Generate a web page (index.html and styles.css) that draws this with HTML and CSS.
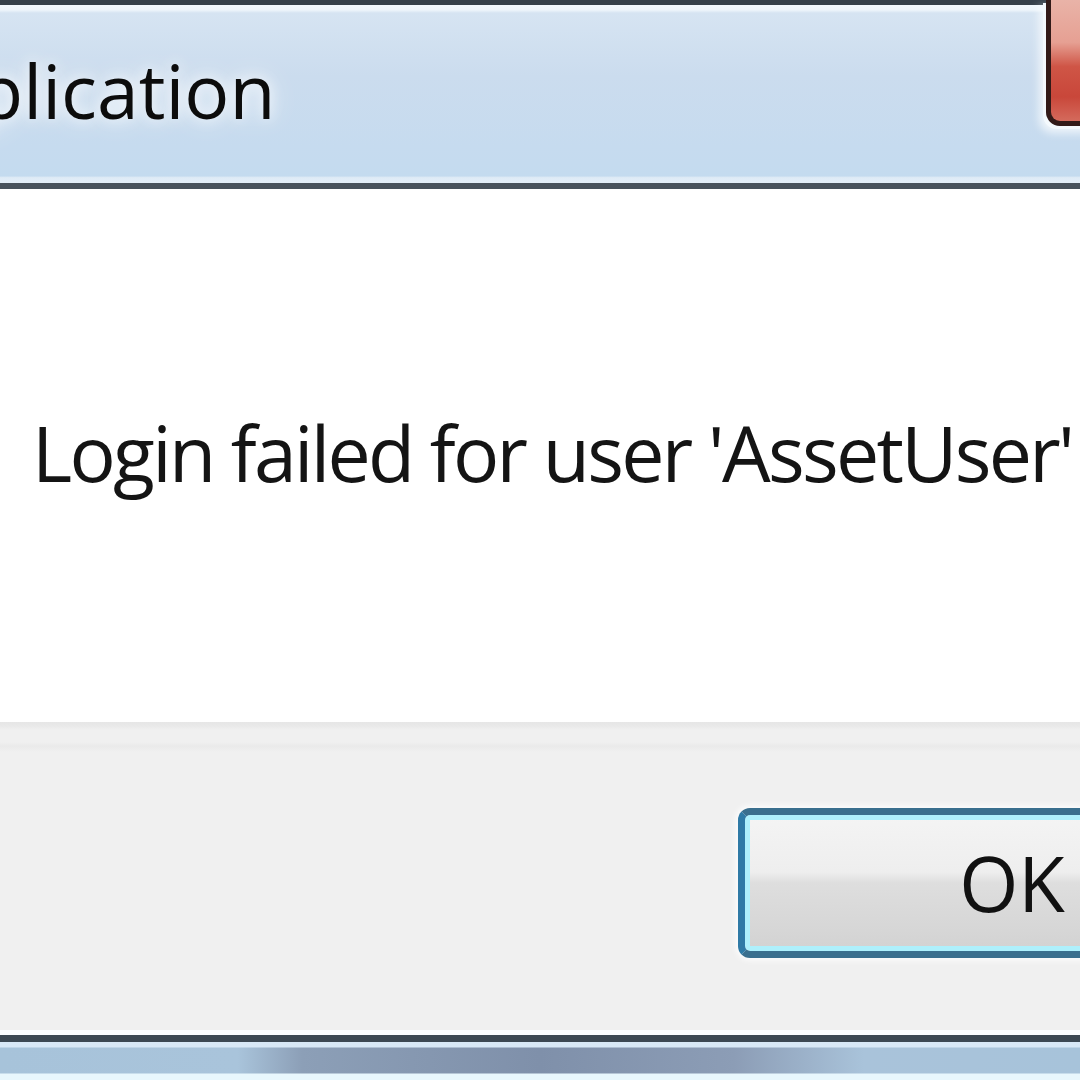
FILE: index.html
```html
<!DOCTYPE html>
<html>
<head>
<meta charset="utf-8">
<link rel="stylesheet" href="styles.css">
</head>
<body>
<div class="window">
  <div class="titlebar">
    <span class="title">Application</span>
    <div class="close"></div>
  </div>
  <div class="content">
    <p class="message">Login failed for user 'AssetUser'</p>
  </div>
  <div class="footer">
    <button class="ok">OK</button>
  </div>
  <div class="frame-bottom"></div>
</div>
</body>
</html>
```
FILE: styles.css
```css
html, body {
  margin: 0;
  padding: 0;
  width: 1080px;
  height: 1080px;
  overflow: hidden;
  background: #ffffff;
}
.window {
  width: 1080px;
  height: 1080px;
  overflow: hidden;
  display: flex;
  flex-direction: column;
  font-family: "Open Sans", "DejaVu Sans", sans-serif;
  color: #111;
}
.titlebar {
  position: relative;
  flex-shrink: 0;
  height: 178px;
  border-top: 5px solid #36404a;
  box-sizing: content-box;
  background:
    linear-gradient(180deg, #f2f8fd 0px, #eef5fb 5px, #d6e4f2 8px, #cbdcee 40%, #c6dbef 80%, #c4dbef 96%, #dfebf6 97%, #e3eef8 100%);
  border-bottom: 6px solid #48525c;
  display: flex;
  align-items: flex-start;
}
.title {
  font-size: 75px;
  line-height: 1;
  margin-left: -116px;
  margin-top: 48px;
  color: #0c0c0c;
  white-space: nowrap;
  text-shadow: 0 0 14px rgba(255,255,255,0.95), 0 0 28px rgba(255,255,255,0.8);
}
.close {
  position: absolute;
  top: -5px;
  left: 1046px;
  width: 60px;
  height: 126px;
  box-sizing: border-box;
  border: 5px solid #321a18;
  border-top: none;
  border-bottom-left-radius: 14px;
  background: linear-gradient(180deg, #e9b3a8 0%, #e6a093 35%, #cf5546 55%, #c9473a 80%, #d46a5c 100%);
  box-shadow: -3px 3px 0 #f4f9fd, -7px 7px 8px rgba(255,255,255,0.7);
}
.content {
  flex-shrink: 0;
  height: 533px;
  background: #ffffff;
  box-sizing: border-box;
  padding-top: 225px;
  padding-left: 32px;
}
.message {
  margin: 0;
  font-size: 77px;
  line-height: 1;
  letter-spacing: -2.7px;
  white-space: nowrap;
  color: #141414;
}
.footer {
  flex-shrink: 0;
  height: 313px;
  box-sizing: border-box;
  background: linear-gradient(180deg, #e6e6e6 0px, #e9e9e9 4px, #f0f0f0 8px, #f0f0f0 20px, #eaeaea 24px, #f0f0f0 30px, #f0f0f0 100%);
  padding-top: 86px;
  padding-left: 738px;
  border-bottom: 5px solid #fbfdff;
}
.ok {
  width: 548px;
  height: 150px;
  flex-shrink: 0;
  box-sizing: border-box;
  border: 7px solid #2f7aa6;
  border-top-color: #3a6f8e;
  border-bottom-color: #3a6f8e;
  border-radius: 12px;
  background: linear-gradient(180deg, #f4f4f4 0%, #eeeeee 42%, #dedede 50%, #d6d6d6 85%, #d2d2d2 100%);
  box-shadow: inset 0 0 0 5px #aef0fc, 0 0 6px 2px rgba(255,255,255,0.9);
  font-family: "Open Sans", "DejaVu Sans", sans-serif;
  font-size: 76px;
  line-height: 1;
  color: #111;
  padding: 0;
  margin: 0;
  display: flex;
  align-items: center;
  justify-content: center;
}
.frame-bottom {
  flex: 1;
  border-top: 7px solid #3c4853;
  background:
    linear-gradient(180deg, #d8e8f6 0px, #d8e8f6 5px, rgba(255,255,255,0) 6px, rgba(255,255,255,0) 31px, #e8f7fd 32px),
    linear-gradient(90deg, #a7c3da 0%, #a9c4db 22%, #8c9fb7 28%, #7f90aa 50%, #8c9db6 68%, #a9c3da 80%, #a7c3da 100%);
}
```
